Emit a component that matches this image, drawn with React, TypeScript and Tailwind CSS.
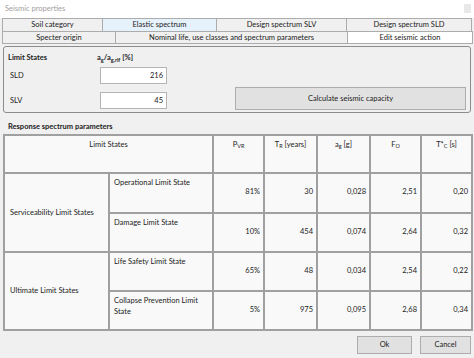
import React from 'react';

const font = { fontFamily: 'Lato, "Open Sans", sans-serif' };

function Tab({ label, active, selected, className }: { label: string; active?: boolean; selected?: boolean; className: string }) {
    return (
        <div
            className={`flex items-center justify-center border border-[#acacac] -ml-px text-[7.5px] text-[#222] ${selected ? 'bg-white' : active ? 'bg-[#e5f1fb]' : 'bg-[#f0f0f0]'} ${className}`}
        >
            {label}
        </div>
    );
}

const rows = [
    { group: 'Serviceability Limit States', name: 'Operational Limit State', p: '81%', t: '30', ag: '0,028', fo: '2,51', tc: '0,20' },
    { group: '', name: 'Damage Limit State', p: '10%', t: '454', ag: '0,074', fo: '2,64', tc: '0,32' },
    { group: 'Ultimate Limit States', name: 'Life Safety Limit State', p: '65%', t: '48', ag: '0,034', fo: '2,54', tc: '0,22' },
    { group: '', name: 'Collapse Prevention Limit State', p: '5%', t: '975', ag: '0,095', fo: '2,68', tc: '0,34' },
];

export default function App() {
    return (
        <div className="w-[474px] h-[358px] bg-[#f0f0f0] flex flex-col overflow-hidden text-[#222]" style={font}>
            {/* title bar */}
            <div className="h-[18px] bg-white flex items-center justify-between pl-[5px] pr-[3px]">
                <span className="text-[7.5px] text-[#a0a0a0]">Seismic properties</span>
                <div className="w-[7px] h-[9px] bg-[#e8e8e8] mb-[2px]" />
            </div>

            {/* tabs */}
            <div className="flex pl-[3px] h-[14px]">
                <Tab label="Soil category" className="w-[101px]" />
                <Tab label="Elastic spectrum" active className="w-[115px]" />
                <Tab label="Design spectrum SLV" className="w-[131px]" />
                <Tab label="Design spectrum SLD" className="w-[126px]" />
            </div>
            <div className="flex pl-[3px] h-[13px] -mt-px">
                <Tab label="Specter origin" className="w-[114px]" />
                <Tab label="Nominal life, use classes and spectrum parameters" className="w-[233px]" />
                <Tab label="Edit seismic action" selected className="w-[126px]" />
            </div>

            {/* limit states group */}
            <div className="mx-[3px] mt-[2px] h-[67px] border border-[#8c8c8c] rounded-[3px] flex px-[4px] pt-[6px]">
                <div className="flex flex-col w-[229px]">
                    <div className="flex items-center h-[10px] text-[7.5px] font-bold">
                        <span className="w-[89px]">Limit States</span>
                        <span className="font-bold">
                            a<sub className="text-[5.5px]">g</sub>/a<sub className="text-[5.5px]">g,rif</sub> [%]
                        </span>
                    </div>
                    <div className="flex items-center mt-[4px] h-[17px] text-[7.5px]">
                        <span className="w-[92px] pl-[2px]">SLD</span>
                        <div className="w-[67px] h-[17px] bg-white border border-[#b4b4b4] flex items-center justify-end pr-[3px]">216</div>
                    </div>
                    <div className="flex items-center mt-[8px] h-[17px] text-[7.5px]">
                        <span className="w-[92px] pl-[2px]">SLV</span>
                        <div className="w-[67px] h-[17px] bg-white border border-[#b4b4b4] flex items-center justify-end pr-[3px]">45</div>
                    </div>
                </div>
                <div className="flex flex-col justify-end pb-[2px]">
                    <button className="w-[231px] h-[23px] bg-[#e1e1e1] border border-[#adadad] text-[7.5px] text-[#222]">
                        Calculate seismic capacity
                    </button>
                </div>
            </div>

            {/* response spectrum */}
            <div className="pl-[8px] mt-[8px] h-[12px] text-[7.5px] font-bold flex items-center">Response spectrum parameters</div>

            <div
                className="ml-[3px] mt-[1px] w-[470px] grid bg-[#a0a0a0] gap-[2px] p-[2px] text-[7.5px]"
                style={{ gridTemplateColumns: '103px 102px 49px 51px 51px 49px 49px', gridTemplateRows: '36px 38px 37px 37px 37px' }}
            >
                <div className="col-span-2 bg-[#f9f9f9] text-center pt-[3px]">Limit States</div>
                <div className="bg-[#f9f9f9] text-center pt-[3px]">
                    P<sub className="text-[5.5px]">VR</sub>
                </div>
                <div className="bg-[#f9f9f9] text-center pt-[3px]">
                    T<sub className="text-[5.5px]">R</sub> [years]
                </div>
                <div className="bg-[#f9f9f9] text-center pt-[3px]">
                    a<sub className="text-[5.5px]">g</sub> [g]
                </div>
                <div className="bg-[#f9f9f9] text-center pt-[3px]">
                    F<sub className="text-[5.5px]">O</sub>
                </div>
                <div className="bg-[#f9f9f9] text-center pt-[3px]">
                    T*<sub className="text-[5.5px]">C</sub> [s]
                </div>

                {rows.map((r, i) => (
                    <React.Fragment key={r.name}>
                        {r.group && (
                            <div className="row-span-2 bg-[#f9f9f9] flex items-center pl-[5px]">{r.group}</div>
                        )}
                        <div className="bg-[#f9f9f9] pl-[4px] pt-[3px] pr-[6px] leading-[11px]">{r.name}</div>
                        {[r.p, r.t, r.ag, r.fo, r.tc].map((v, j) => (
                            <div key={`${i}-${j}`} className="bg-[#f9f9f9] flex items-center justify-end pr-[3px] pb-[2px]">
                                {v}
                            </div>
                        ))}
                    </React.Fragment>
                ))}
            </div>

            {/* footer buttons */}
            <div className="flex justify-end gap-[8px] pr-[3px] mt-[5px]">
                <button className="w-[55px] h-[18px] bg-[#e1e1e1] border border-[#adadad] text-[7.5px]">Ok</button>
                <button className="w-[51px] h-[18px] bg-[#e1e1e1] border border-[#adadad] text-[7.5px]">Cancel</button>
            </div>
        </div>
    );
}
